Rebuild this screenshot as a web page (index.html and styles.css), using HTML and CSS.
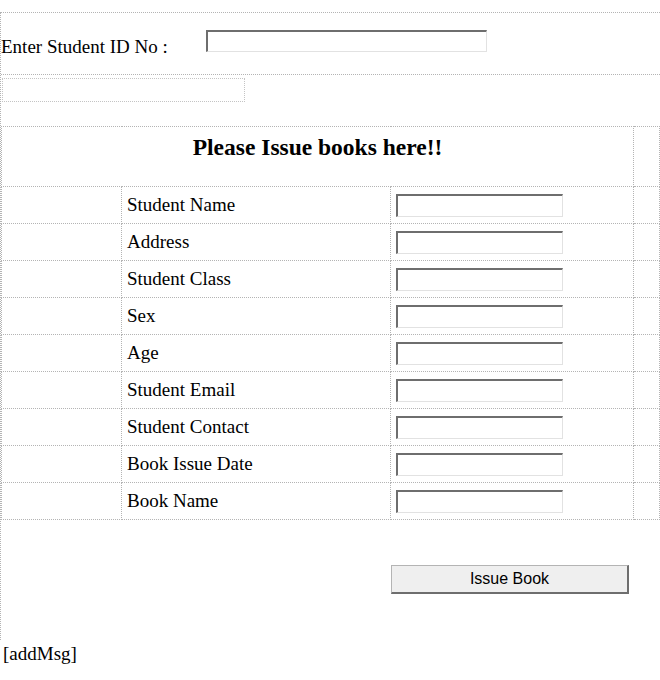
FILE: index.html
```html
<!DOCTYPE html>
<html lang="en">
<head>
    <meta charset="UTF-8">
    <title>Issue Book</title>
    <link rel="stylesheet" href="styles.css">
</head>
<body>
    <div class="page">
        <div class="search-row">
            <label class="search-label" for="student-id">Enter Student ID No :</label>
            <input type="text" id="student-id" class="textbox id-box">
        </div>

        <div class="msg-row">
            <div class="msg-box"></div>
        </div>

        <table class="issue-table">
            <colgroup>
                <col class="col-blank">
                <col class="col-label">
                <col class="col-input">
                <col class="col-spare">
            </colgroup>
            <tr class="head-row">
                <th colspan="3">Please Issue books here!!</th>
                <td></td>
            </tr>
            <tr>
                <td></td>
                <td class="field-name">Student Name</td>
                <td class="field-input"><input type="text" class="textbox"></td>
                <td></td>
            </tr>
            <tr>
                <td></td>
                <td class="field-name">Address</td>
                <td class="field-input"><input type="text" class="textbox"></td>
                <td></td>
            </tr>
            <tr>
                <td></td>
                <td class="field-name">Student Class</td>
                <td class="field-input"><input type="text" class="textbox"></td>
                <td></td>
            </tr>
            <tr>
                <td></td>
                <td class="field-name">Sex</td>
                <td class="field-input"><input type="text" class="textbox"></td>
                <td></td>
            </tr>
            <tr>
                <td></td>
                <td class="field-name">Age</td>
                <td class="field-input"><input type="text" class="textbox"></td>
                <td></td>
            </tr>
            <tr>
                <td></td>
                <td class="field-name">Student Email</td>
                <td class="field-input"><input type="text" class="textbox"></td>
                <td></td>
            </tr>
            <tr>
                <td></td>
                <td class="field-name">Student Contact</td>
                <td class="field-input"><input type="text" class="textbox"></td>
                <td></td>
            </tr>
            <tr>
                <td></td>
                <td class="field-name">Book Issue Date</td>
                <td class="field-input"><input type="text" class="textbox"></td>
                <td></td>
            </tr>
            <tr>
                <td></td>
                <td class="field-name">Book Name</td>
                <td class="field-input"><input type="text" class="textbox"></td>
                <td></td>
            </tr>
        </table>

        <div class="actions">
            <button type="button" class="issue-btn">Issue Book</button>
        </div>
    </div>

    <p class="add-msg">[addMsg]</p>
</body>
</html>
```

FILE: styles.css
```css
body {
    margin: 0;
    font-family: "Liberation Serif", "Times New Roman", serif;
    font-size: 19px;
    color: #000;
    background-color: #fff;
}

.page {
    margin-top: 12px;
    border-left: 1px dotted #b4b4b4;
    padding-bottom: 46px;
}

.search-row {
    display: flex;
    align-items: flex-start;
    height: 62px;
    box-sizing: border-box;
    padding: 17px 0 0 0;
    border-top: 1px dotted #b4b4b4;
}

.search-label {
    margin-top: 6px;
    line-height: 22px;
}

.textbox {
    box-sizing: border-box;
    width: 167px;
    height: 23px;
    padding: 0 2px;
    margin: 0;
    border-top: 2px solid #6e6e6e;
    border-left: 2px solid #6e6e6e;
    border-right: 1px solid #e2e2e2;
    border-bottom: 1px solid #e2e2e2;
    background-color: #fff;
    font-size: 13px;
}

.id-box {
    width: 281px;
    height: 22px;
    margin-left: 38px;
}

.msg-row {
    height: 52px;
    box-sizing: border-box;
    padding: 3px 0 0 1px;
    border-top: 1px dotted #b4b4b4;
}

.msg-box {
    width: 241px;
    height: 22px;
    border: 1px dotted #c4c4c4;
}

.issue-table {
    width: 100%;
    table-layout: fixed;
    border-collapse: collapse;
}

.issue-table td,
.issue-table th {
    border: 1px dotted #b4b4b4;
    padding: 0;
}

.col-blank { width: 120px; }
.col-label { width: 269px; }
.col-input { width: 243px; }

.head-row td {
    height: 59px;
}

.head-row th {
    height: 52px;
    padding-top: 7px;
    vertical-align: top;
    font-size: 23.5px;
    font-weight: bold;
    text-align: center;
    line-height: 27px;
}

.issue-table tr {
    height: 37px;
}

.issue-table .field-name {
    padding-left: 5px;
    line-height: 22px;
}

.issue-table .field-input {
    padding-left: 5px;
    line-height: 0;
}

.actions {
    padding: 45px 0 0 390px;
}

.issue-btn {
    width: 238px;
    height: 29px;
    margin: 0;
    padding: 0;
    font-family: "Liberation Sans", Arial, sans-serif;
    font-size: 16px;
    color: #000;
    background-color: #efefef;
    border-top: 1px solid #b4b4b4;
    border-left: 1px solid #b4b4b4;
    border-right: 2px solid #6e6e6e;
    border-bottom: 2px solid #6e6e6e;
}

.add-msg {
    margin: 3px 0 0 3px;
    line-height: 22px;
}
```
